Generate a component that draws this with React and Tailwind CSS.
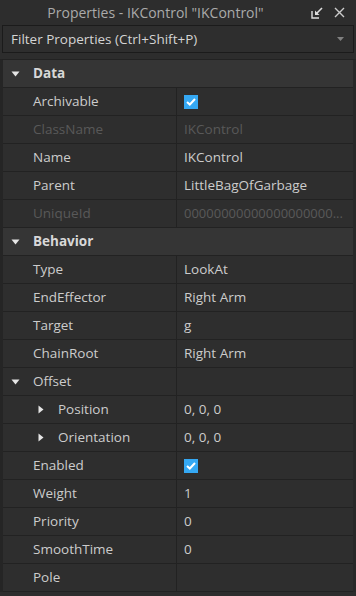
import React from "react";

const SECTIONS = [
  {
    title: "Data",
    rows: [
      { name: "Archivable", check: true },
      { name: "ClassName", value: "IKControl", disabled: true },
      { name: "Name", value: "IKControl" },
      { name: "Parent", value: "LittleBagOfGarbage" },
      { name: "UniqueId", value: "00000000000000000000...", disabled: true, small: true },
    ],
  },
  {
    title: "Behavior",
    rows: [
      { name: "Type", value: "LookAt" },
      { name: "EndEffector", value: "Right Arm" },
      { name: "Target", value: "g" },
      { name: "ChainRoot", value: "Right Arm" },
      { name: "Offset", open: true },
      { name: "Position", value: "0, 0, 0", level: 1, closed: true },
      { name: "Orientation", value: "0, 0, 0", level: 1, closed: true },
      { name: "Enabled", check: true },
      { name: "Weight", value: "1" },
      { name: "Priority", value: "0" },
      { name: "SmoothTime", value: "0" },
      { name: "Pole", value: "" },
    ],
  },
];

const DownArrow = ({ className }) => (
  <svg width="9" height="6" viewBox="0 0 9 6" className={className}>
    <path d="M0.5 0.5 H8.5 L4.5 5.5 Z" fill="#e6e6e6" />
  </svg>
);

const RightArrow = ({ className }) => (
  <svg width="6" height="9" viewBox="0 0 6 9" className={className}>
    <path d="M0.5 0.5 V8.5 L5.5 4.5 Z" fill="#e6e6e6" />
  </svg>
);

const Checkbox = () => (
  <div className="w-[14px] h-[14px] bg-[#35a8f3] flex items-center justify-center">
    <svg width="10" height="8" viewBox="0 0 10 8">
      <path d="M1 4 L3.8 6.5 L9 1" stroke="#ffffff" strokeWidth="2" fill="none" />
    </svg>
  </div>
);

const Row = ({ row }) => {
  const indent = row.level ? "pl-[55px]" : "pl-[30px]";
  const tone = row.disabled ? "text-[#595959]" : "text-[#cccccc]";
  return (
    <div className="flex h-[28px] border-b border-[#222222] bg-[#2e2e2e]">
      <div className={`relative w-[174px] shrink-0 flex items-center border-r border-[#222222] ${indent}`}>
        {row.open && <DownArrow className="absolute left-[8px] top-[11px]" />}
        {row.closed && <RightArrow className="absolute left-[35px] top-[9px]" />}
        <span className={tone}>{row.name}</span>
      </div>
      <div className="flex-1 min-w-0 flex items-center pl-[7px]">
        {row.check ? (
          <Checkbox />
        ) : (
          <span className={`whitespace-nowrap ${row.small ? "text-[13px]" : ""} ${tone}`}>
            {row.value}
          </span>
        )}
      </div>
    </div>
  );
};

export default function App() {
  return (
    <div className="w-[356px] h-[596px] overflow-hidden bg-[#2d2d2d] font-['Open_Sans',sans-serif] text-[13.5px]">
      {/* Title bar */}
      <div className="h-[25px] flex items-center">
        <div className="w-[312px] text-center text-[14px] text-[#aaaaaa]">
          Properties - IKControl "IKControl"
        </div>
        <div className="flex items-center gap-[11px] ml-auto pr-[11px]">
          <svg width="12" height="12" viewBox="0 0 12 12">
            <path d="M1 4 V11 H8" stroke="#dddddd" strokeWidth="1.4" fill="none" />
            <path d="M11 1 L5.5 6.5" stroke="#dddddd" strokeWidth="1.6" />
            <path d="M4 3.5 V8 H8.5 Z" fill="#dddddd" />
          </svg>
          <svg width="11" height="11" viewBox="0 0 11 11">
            <path d="M1 1 L10 10 M10 1 L1 10" stroke="#cccccc" strokeWidth="1.4" />
          </svg>
        </div>
      </div>

      {/* Filter */}
      <div className="mx-[2px] h-[28px] flex items-center border border-[#1b1b1b] bg-[#2e2e2e] pl-[8px] pr-[8px]">
        <span className="text-[#d4d4d4]">Filter Properties (Ctrl+Shift+P)</span>
        <svg width="7" height="4" viewBox="0 0 7 4" className="ml-auto mr-[1px]">
          <path d="M0 0 H7 L3.5 4 Z" fill="#808080" />
        </svg>
      </div>

      {/* Property list */}
      <div className="mt-[6px] border-t border-t-[#222222] border-l-[3px] border-l-[#252525] border-r-[3px] border-r-[#282828]">
        {SECTIONS.map((section) => (
          <div key={section.title}>
            <div className="relative h-[28px] flex items-center pl-[30px] bg-[#353535] border-b border-[#222222]">
              <DownArrow className="absolute left-[8px] top-[11px]" />
              <span className="font-bold text-[#d8d8d8]">{section.title}</span>
            </div>
            {section.rows.map((row) => (
              <Row key={row.name} row={row} />
            ))}
          </div>
        ))}
      </div>
    </div>
  );
}
